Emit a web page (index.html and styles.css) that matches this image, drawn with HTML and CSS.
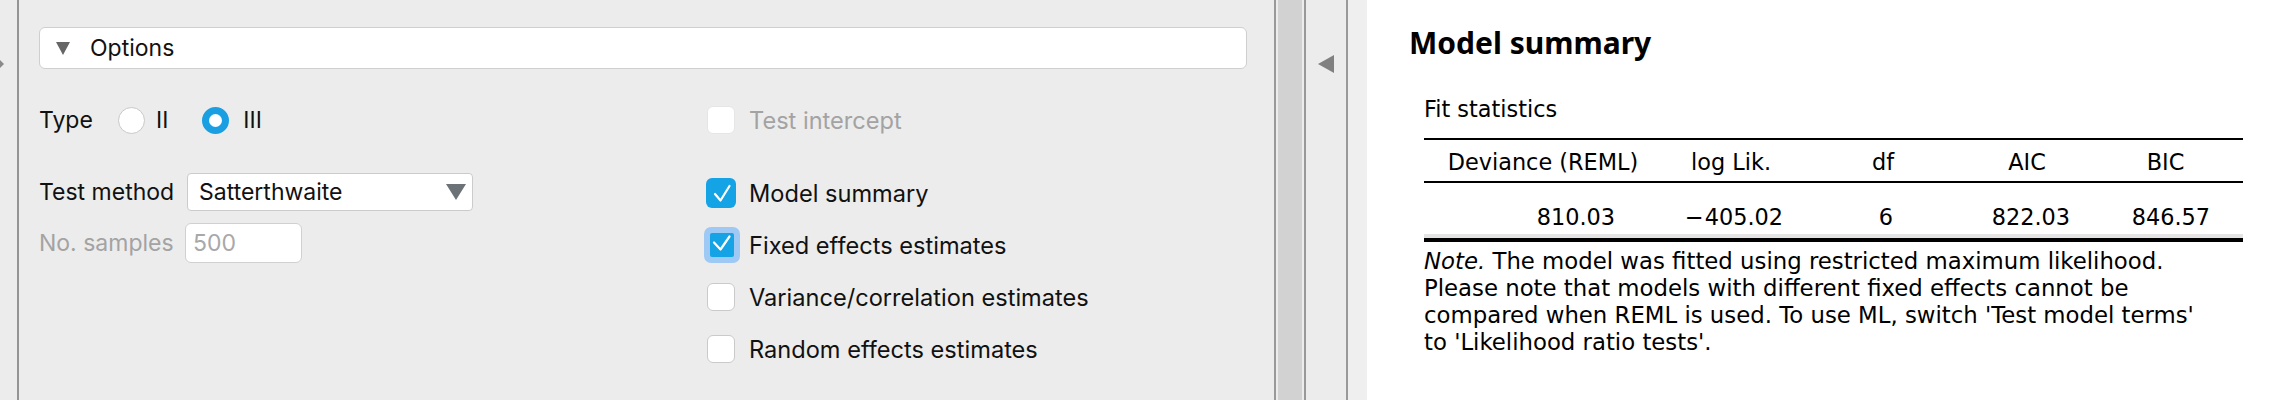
FILE: index.html
```html
<!DOCTYPE html>
<html>
<head>
<meta charset="utf-8">
<link rel="stylesheet" href="styles.css">
</head>
<body>
<div class="app">
  <div class="left">
    <div class="edge"><span class="edge-arrow"></span></div>
    <div class="form">
      <div class="section-head"><span class="tri-down"></span><span class="section-title">Options</span></div>
      <div class="cols">
        <div class="col col-a">
          <div class="type-row">
            <span class="lbl type-lbl">Type</span>
            <span class="radio"></span><span class="rlbl rlbl-ii">II</span>
            <span class="radio on"></span><span class="rlbl rlbl-iii">III</span>
          </div>
          <div class="method-row">
            <span class="lbl method-lbl">Test method</span>
            <div class="select"><span class="select-text">Satterthwaite</span><span class="sel-tri"></span></div>
          </div>
          <div class="samples-row">
            <span class="lbl dis samples-lbl">No. samples</span>
            <div class="input">500</div>
          </div>
        </div>
        <div class="col col-b">
          <div class="check-row first"><span class="cb cb-dis"></span><span class="lbl dis">Test intercept</span></div>
          <div class="check-row second"><span class="cb cb-on"><svg class="tick" viewBox="0 0 30 30"><polyline points="9,16 14.5,22.5 23.5,8"/></svg></span><span class="lbl">Model summary</span></div>
          <div class="check-row"><span class="cb-focus"><span class="cb-inner"><svg class="tick" viewBox="0 0 24 24"><polyline points="4,9.5 10.5,16.5 19.5,3.5"/></svg></span></span><span class="lbl">Fixed effects estimates</span></div>
          <div class="check-row"><span class="cb"></span><span class="lbl">Variance/correlation estimates</span></div>
          <div class="check-row"><span class="cb"></span><span class="lbl">Random effects estimates</span></div>
        </div>
      </div>
    </div>
  </div>
  <div class="splitter">
    <div class="gutter"></div>
    <div class="collapse"><span class="tri-left"></span></div>
    <div class="split-pad"></div>
  </div>
  <div class="right">
    <h1 class="title">Model summary</h1>
    <div class="subtitle">Fit statistics</div>
    <table class="stats">
      <thead>
        <tr>
          <th class="c1">Deviance (REML)</th>
          <th class="c2">log Lik.</th>
          <th class="c3">df</th>
          <th class="c4">AIC</th>
          <th class="c5">BIC</th>
        </tr>
      </thead>
      <tbody>
        <tr>
          <td class="c1">810.03</td>
          <td class="c2"><span class="minus">&minus;</span>405.02</td>
          <td class="c3">6</td>
          <td class="c4">822.03</td>
          <td class="c5">846.57</td>
        </tr>
      </tbody>
    </table>
    <p class="note"><em>Note.</em> The model was fitted using restricted maximum likelihood.<br>Please note that models with different fixed effects cannot be<br>compared when REML is used. To use ML, switch 'Test model terms'<br>to 'Likelihood ratio tests'.</p>
  </div>
</div>
</body>
</html>
```
FILE: styles.css
```css
* { box-sizing: border-box; }
html, body { margin: 0; padding: 0; }
body { width: 2280px; height: 400px; overflow: hidden; background: #ffffff; }

.app { display: flex; height: 400px; }

/* ---------- left options panel ---------- */
.left {
  width: 1276px;
  flex: none;
  display: flex;
  background: #ececec;
  border-right: 2px solid #999999;
  font-family: "Inter", "Noto Sans", sans-serif;
  font-size: 23px;
  color: #111111;
}
.edge {
  width: 19px;
  flex: none;
  border-right: 2px solid #949494;
  position: relative;
}
.edge-arrow {
  position: absolute;
  left: 0;
  top: 60px;
  width: 0; height: 0;
  border-top: 4px solid transparent;
  border-bottom: 4px solid transparent;
  border-left: 4px solid #8a8a8a;
}
.form {
  flex: 1;
  padding: 27px 27px 0 20px;
}
.section-head {
  height: 42px;
  display: flex;
  align-items: center;
  background: #ffffff;
  border: 1.5px solid #cfcfcf;
  border-radius: 6px;
  padding-left: 16px;
}
.tri-down {
  width: 0; height: 0;
  border-left: 7.5px solid transparent;
  border-right: 7.5px solid transparent;
  border-top: 13px solid #666666;
  margin-right: 20px;
}
.section-title { line-height: 1; }

.cols { display: flex; margin-top: 25px; }
.col-a { width: 668px; flex: none; }
.col-b { flex: 1; font-size: 23.6px; }

.lbl { white-space: nowrap; }
.dis { color: #a3a3a3; }

.type-row { height: 52px; display: flex; align-items: center; }
.type-lbl { width: 79px; }
.radio {
  width: 27px; height: 27px;
  border-radius: 50%;
  background: #ffffff;
  border: 1.5px solid #c8c8c8;
  flex: none;
}
.radio.on { border: 7px solid #1a9fe2; }
.rlbl-ii { margin-left: 11px; margin-right: 34px; }
.rlbl-iii { margin-left: 14px; }

.method-row { margin-top: 27px; height: 38px; display: flex; align-items: center; }
.method-lbl { width: 148px; }
.select {
  width: 286px; height: 38px;
  display: flex; align-items: center;
  background: #ffffff;
  border: 1.5px solid #cbcbcb;
  border-radius: 4px;
  padding-left: 11px;
  padding-right: 6px;
}
.select-text { flex: 1; }
.sel-tri {
  width: 0; height: 0;
  border-left: 10px solid transparent;
  border-right: 10px solid transparent;
  border-top: 16px solid #6b7278;
}

.samples-row { margin-top: 12px; height: 40px; display: flex; align-items: center; }
.samples-lbl { width: 146px; }
.input {
  width: 117px; height: 40px;
  display: flex; align-items: center;
  background: #ffffff;
  border: 1.5px solid #d0d0d0;
  border-radius: 6px;
  padding-left: 7px;
  color: #a8a8a8;
}

.check-row { height: 52px; display: flex; align-items: center; }
.check-row.second { margin-top: 21px; }
.cb {
  width: 28px; height: 28px;
  flex: none;
  background: #ffffff;
  border: 1.5px solid #cacaca;
  border-radius: 6px;
  margin-right: 14px;
  display: flex; align-items: center; justify-content: center;
}
.cb-dis { border-color: #e6e6e6; }
.cb-on {
  width: 30px; height: 30px;
  margin-left: -1px;
  margin-right: 13px;
  background: #14a3e5;
  border: none;
}
.cb-focus {
  width: 36px; height: 36px;
  flex: none;
  margin-left: -3px;
  margin-right: 9px;
  background: #9dc9f4;
  border-radius: 7px;
  display: flex; align-items: center; justify-content: center;
}
.cb-inner {
  width: 24px; height: 24px;
  background: #14a3e5;
  border-radius: 2px;
  display: flex;
}
.tick { width: 100%; height: 100%; display: block; }
.tick polyline { fill: none; stroke: #ffffff; stroke-width: 2.2; stroke-linecap: round; stroke-linejoin: round; }

/* ---------- splitter ---------- */
.splitter { display: flex; flex: none; background: #ececec; }
.gutter { width: 24px; margin: 0 2px; background: #d2d2d2; }
.collapse {
  width: 44px;
  border-left: 2px solid #999999;
  border-right: 2px solid #999999;
  padding: 55px 0 0 12px;
}
.tri-left {
  display: block;
  width: 0; height: 0;
  border-top: 9px solid transparent;
  border-bottom: 9px solid transparent;
  border-right: 16px solid #808080;
}
.split-pad { width: 19px; background: #efefef; }

/* ---------- right results panel ---------- */
.right {
  flex: 1;
  background: #ffffff;
  padding: 23px 0 0 42px;
  font-family: "DejaVu Sans", "Noto Sans", sans-serif;
  font-size: 22.4px;
  color: #000000;
}
.title {
  margin: 0;
  font-family: "Noto Sans", "DejaVu Sans", sans-serif;
  font-size: 30px;
  font-weight: 700;
  line-height: 40px;
}
.subtitle {
  margin: 31px 0 0 15px;
  line-height: 30px;
}
.stats {
  margin: 14px 0 0 15px;
  width: 819px;
  border-collapse: separate;
  border-spacing: 0;
  border-bottom: 4px solid #000000;
  font-size: 22.4px;
  line-height: 30px;
  table-layout: fixed;
}
.stats th {
  font-weight: 400;
  text-align: center;
  padding: 7px 0 4px 0;
  border-top: 2px solid #000000;
  border-bottom: 2px solid #000000;
}
.stats td {
  text-align: right;
  padding: 19px 0 2px 0;
  border-bottom: 4px solid #e4e4e4;
}
.minus { margin-right: 1px; }
.stats .c1 { width: 238px; }
.stats .c2 { width: 138px; }
.stats .c3 { width: 166px; }
.stats .c4 { width: 122px; }
.stats .c5 { width: 155px; }
.stats td.c1 { padding-right: 47px; }
.stats td.c2 { padding-right: 17px; }
.stats td.c3 { padding-right: 73px; }
.stats td.c4 { padding-right: 18px; }
.stats td.c5 { padding-right: 33px; }

.note {
  margin: 6px 0 0 15px;
  font-size: 22.8px;
  line-height: 27px;
  white-space: nowrap;
}
```
